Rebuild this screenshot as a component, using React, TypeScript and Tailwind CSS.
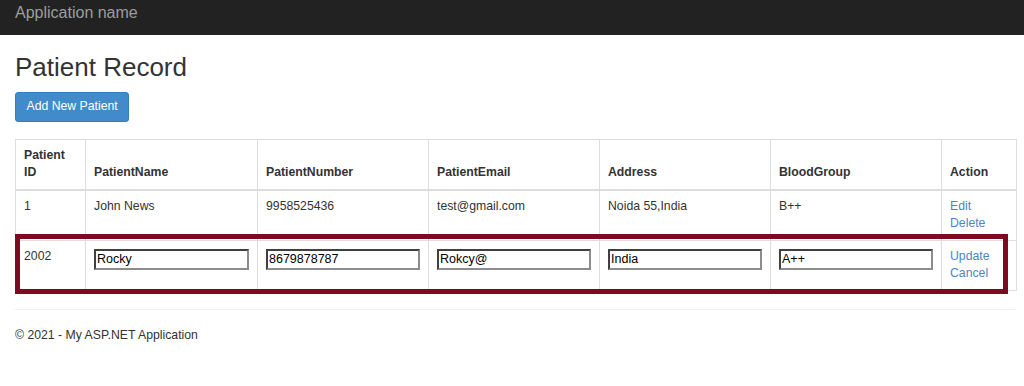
import React from "react";

const cols = [70, 172, 171, 171, 171, 171, 75];

function Input({ value }: { value: string }) {
  return (
    <input
      readOnly
      value={value}
      className="block w-full h-[21px] mt-[1px] px-[1px] text-[12.5px] text-black bg-white border-2 border-t-[#404040] border-l-[#404040] border-r-[#8c8c8c] border-b-[#8c8c8c] outline-none"
      style={{ fontFamily: '"Liberation Sans", Arial, sans-serif' }}
    />
  );
}

export default function App() {
  const th = "border border-[#dddddd] px-[8px] py-[7px] align-bottom text-left font-bold";
  const td = "border border-[#dddddd] px-[8px] py-[7px] align-top";
  return (
    <div
      className="w-[1024px] h-[386px] bg-white text-[#333333] text-[12.25px] leading-[17.5px] overflow-hidden"
      style={{ fontFamily: '"Liberation Sans", Arial, Helvetica, sans-serif' }}
    >
      <div className="h-[35px] bg-[#222222] px-[15px]">
        <div className="pt-[3px] text-[16px] leading-[20px] text-[#9d9d9d]">Application name</div>
      </div>
      <div className="pl-[15px] w-[1016px]">
        <h2 className="mt-[18px] text-[26px] leading-[28.6px] font-normal text-[#333333]">Patient Record</h2>
        <button className="mt-[10px] h-[30px] px-[10.5px] rounded-[3px] bg-[#428bca] border border-[#357ebd] text-white text-[12.25px] leading-[17.5px]">
          Add New Patient
        </button>
        <div className="relative mt-[17px] w-[1001px]">
          <table className="w-[1001px] border-collapse table-fixed">
            <colgroup>
              {cols.map((w, i) => (
                <col key={i} style={{ width: w }} />
              ))}
            </colgroup>
            <thead>
              <tr className="border-b-2 border-[#dddddd]">
                <th className={th}>
                  Patient
                  <br />
                  ID
                </th>
                <th className={th}>PatientName</th>
                <th className={th}>PatientNumber</th>
                <th className={th}>PatientEmail</th>
                <th className={th}>Address</th>
                <th className={th}>BloodGroup</th>
                <th className={th}>Action</th>
              </tr>
            </thead>
            <tbody>
              <tr>
                <td className={td}>1</td>
                <td className={td}>John News</td>
                <td className={td}>9958525436</td>
                <td className={td}>test@gmail.com</td>
                <td className={td}>Noida 55,India</td>
                <td className={td}>B++</td>
                <td className={td}>
                  <div className="text-[#4a86c6]">Edit</div>
                  <div className="text-[#4a86c6]">Delete</div>
                </td>
              </tr>
              <tr>
                <td className={td}>2002</td>
                <td className={td}>
                  <Input value="Rocky" />
                </td>
                <td className={td}>
                  <Input value="8679878787" />
                </td>
                <td className={td}>
                  <Input value="Rokcy@" />
                </td>
                <td className={td}>
                  <Input value="India" />
                </td>
                <td className={td}>
                  <Input value="A++" />
                </td>
                <td className={td}>
                  <div className="text-[#4a86c6]">Update</div>
                  <div className="text-[#4a86c6]">Cancel</div>
                </td>
              </tr>
            </tbody>
          </table>
          <div className="absolute left-0 top-[95px] w-[993px] h-[60px] border-[5px] border-[#7d0a1f] pointer-events-none" />
        </div>
        <hr className="mt-[18px] border-0 border-t border-[#eeeeee]" />
        <footer className="mt-[17px] text-[12.25px] leading-[17.5px] text-[#333333]">© 2021 - My ASP.NET Application</footer>
      </div>
    </div>
  );
}
